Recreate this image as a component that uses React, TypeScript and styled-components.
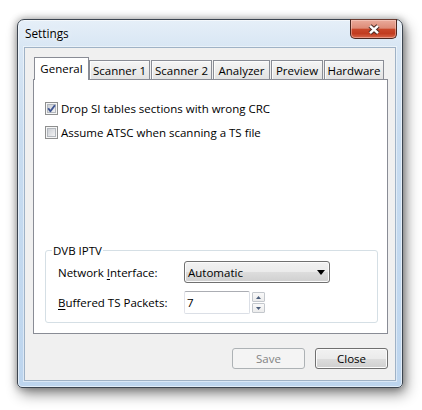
import React, { useId } from "react";
import styled, { createGlobalStyle } from "styled-components";

const Global = createGlobalStyle`
  html, body { margin: 0; padding: 0; background: #ffffff; }
  body {
    width: 422px; height: 410px; overflow: hidden;
    font-family: "Open Sans", "Noto Sans", sans-serif;
    font-size: 11.5px; color: #000;
  }
  * { box-sizing: border-box; }
`;

const Page = styled.div`
  padding: 19px 0 0 17px;
`;

const Window = styled.div`
  width: 386px;
  height: 369px;
  display: flex;
  flex-direction: column;
  padding: 0 6px 6px 6px;
  border: 1px solid #3c4550;
  border-radius: 7px 7px 5px 5px;
  background: linear-gradient(180deg, #e6eff8 0px, #d8e6f4 28px, #c8dcf0 120px, #bdd5ee 100%);
  box-shadow: inset 0 0 0 1px rgba(255, 255, 255, 0.55), 0 0 7px 1px rgba(0, 0, 0, 0.28),
    3px 6px 14px rgba(0, 0, 0, 0.45);
`;

const TitleBar = styled.div`
  height: 27px;
  display: flex;
  align-items: flex-start;
  justify-content: space-between;
`;

const Title = styled.div`
  padding: 6px 0 0 1px;
  line-height: 15px;
  font-size: 11.8px;
  text-shadow: 0 0 6px rgba(255, 255, 255, 0.9);
`;

const CloseBtn = styled.div`
  width: 47px;
  height: 20px;
  margin: -1px -1px 0 0;
  display: flex;
  align-items: center;
  justify-content: center;
  border: 1px solid #4b2720;
  border-top-color: #6a3a30;
  border-radius: 0 0 5px 5px;
  background: linear-gradient(180deg, #eaab9c 0%, #dd8b77 45%, #c8472a 52%, #c13c20 75%, #d8674a 100%);
  box-shadow: inset 0 0 0 1px rgba(255, 220, 210, 0.45);
`;

const Client = styled.div`
  flex: 1;
  display: flex;
  flex-direction: column;
  background: #f0f0f0;
  border: 1px solid #9fb2c6;
  box-shadow: 0 0 0 1px rgba(255, 255, 255, 0.45);
  padding: 9px 7px 11px 8px;
`;

const TabRow = styled.div`
  position: relative;
  z-index: 1;
  height: 22px;
  display: flex;
  align-items: flex-start;
  gap: 1px;
  padding-left: 1px;
`;

const Tab = styled.div<{ $active?: boolean; $w: number }>`
  width: ${(p) => p.$w}px;
  height: ${(p) => (p.$active ? 23 : 19)}px;
  margin-top: ${(p) => (p.$active ? 0 : 3)}px;
  margin-right: ${(p) => (p.$active ? -1 : 0)}px;
  display: flex;
  align-items: center;
  justify-content: center;
  padding-bottom: ${(p) => (p.$active ? 2 : 0)}px;
  border: 1px solid #898c95;
  border-bottom: none;
  background: ${(p) =>
    p.$active ? "#ffffff" : "linear-gradient(180deg, #f5f5f5 0%, #ececec 50%, #e2e2e2 100%)"};
  box-shadow: ${(p) => (p.$active ? "none" : "inset 1px 1px 0 #fbfbfb")};
  white-space: nowrap;
`;

const Panel = styled.div`
  height: 255px;
  display: flex;
  flex-direction: column;
  background: #ffffff;
  border: 1px solid #898c95;
  padding: 21px 9px 10px 11px;
`;

const CheckList = styled.div`
  display: flex;
  flex-direction: column;
  gap: 9px;
`;

const CheckRow = styled.div`
  height: 15px;
  display: flex;
  align-items: center;
  gap: 3px;
  line-height: 15px;
`;

const Group = styled.fieldset`
  margin: auto 0 0 0;
  padding: 3px 9px 8px 12px;
  border: 1px solid #d5dfe5;
  border-radius: 3px;
  min-width: 0;
`;

const Legend = styled.legend`
  margin-left: -6px;
  padding: 0 1px;
  line-height: 15px;
`;

const FormGrid = styled.div`
  display: grid;
  grid-template-columns: 126px 1fr;
  row-gap: 8px;
  align-items: center;
`;

const Label = styled.span`
  line-height: 15px;
`;

const Combo = styled.div`
  width: 146px;
  height: 22px;
  display: flex;
  align-items: center;
  justify-content: space-between;
  padding: 0 4px 0 3px;
  border: 1px solid #707070;
  border-radius: 3px;
  background: linear-gradient(180deg, #f2f2f2 0%, #ebebeb 50%, #dddddd 51%, #cfcfcf 100%);
  box-shadow: inset 0 0 0 1px #fbfbfb;
`;

const SpinBox = styled.div`
  display: flex;
  align-items: center;
  gap: 2px;
`;

const TextBox = styled.div`
  width: 66px;
  height: 23px;
  display: flex;
  align-items: center;
  padding-left: 2px;
  background: #ffffff;
  border: 1px solid #dbdfe6;
  border-top-color: #abadb3;
  border-left-color: #e2e3ea;
  border-radius: 2px;
`;

const SpinCol = styled.div`
  display: flex;
  flex-direction: column;
  gap: 1px;
`;

const SpinBtn = styled.div`
  width: 13px;
  height: 10px;
  display: flex;
  align-items: center;
  justify-content: center;
  border: 1px solid #c3c7cc;
  border-radius: 1px;
  background: linear-gradient(180deg, #f9f9f9 0%, #ececec 100%);
`;

const ButtonRow = styled.div`
  margin-top: 14px;
  display: flex;
  justify-content: flex-end;
  gap: 10px;
`;

const Button = styled.div<{ $disabled?: boolean }>`
  width: 73px;
  height: 21px;
  display: flex;
  align-items: center;
  justify-content: center;
  border-radius: 3px;
  border: 1px solid ${(p) => (p.$disabled ? "#adb2b5" : "#707070")};
  color: ${(p) => (p.$disabled ? "#838383" : "#000")};
  background: ${(p) =>
    p.$disabled
      ? "#f4f4f4"
      : "linear-gradient(180deg, #f2f2f2 0%, #ebebeb 50%, #dddddd 51%, #cfcfcf 100%)"};
  box-shadow: ${(p) => (p.$disabled ? "none" : "inset 0 0 0 1px #fbfbfb")};
`;

const U = styled.span`
  text-decoration: underline;
  text-underline-offset: 2px;
`;

function CheckBox({ checked }: { checked?: boolean }) {
  const id = useId().replace(/:/g, "");
  return (
    <svg width="13" height="13" viewBox="0 0 13 13" style={{ flex: "none" }}>
      <defs>
        <linearGradient id={`g${id}`} x1="0" y1="0" x2="1" y2="1">
          <stop offset="0" stopColor="#c9cdd3" />
          <stop offset="1" stopColor="#f5f5f5" />
        </linearGradient>
      </defs>
      <rect x="0.5" y="0.5" width="12" height="12" fill="#f6f6f6" stroke="#8e8f8f" />
      <rect x="2.5" y="2.5" width="8" height="8" fill={`url(#g${id})`} stroke="#b3b8be" />
      {checked && (
        <path
          d="M3.2 6.3 L5.4 9.2 L9.9 3.2"
          fill="none"
          stroke="#3f5593"
          strokeWidth="1.9"
          strokeLinejoin="round"
        />
      )}
    </svg>
  );
}

function CloseGlyph() {
  return (
    <svg width="14" height="11" viewBox="0 0 14 11">
      <path d="M3 1.8 L11 9.2 M11 1.8 L3 9.2" stroke="#4a2a24" strokeWidth="4.4" />
      <path d="M3 1.8 L11 9.2 M11 1.8 L3 9.2" stroke="#ffffff" strokeWidth="2.5" />
    </svg>
  );
}

const tabs = [
  { label: "General", w: 55, active: true },
  { label: "Scanner 1", w: 61 },
  { label: "Scanner 2", w: 61 },
  { label: "Analyzer", w: 57 },
  { label: "Preview", w: 52 },
  { label: "Hardware", w: 60 },
];

export default function App() {
  return (
    <>
      <Global />
      <Page>
        <Window>
          <TitleBar>
            <Title>Settings</Title>
            <CloseBtn>
              <CloseGlyph />
            </CloseBtn>
          </TitleBar>
          <Client>
            <TabRow>
              {tabs.map((t) => (
                <Tab key={t.label} $w={t.w} $active={t.active}>
                  {t.label}
                </Tab>
              ))}
            </TabRow>
            <Panel>
              <CheckList>
                <CheckRow>
                  <CheckBox checked />
                  <span>Drop SI tables sections with wrong CRC</span>
                </CheckRow>
                <CheckRow>
                  <CheckBox />
                  <span>Assume ATSC when scanning a TS file</span>
                </CheckRow>
              </CheckList>
              <Group>
                <Legend>DVB IPTV</Legend>
                <FormGrid>
                  <Label>
                    Network <U>I</U>nterface:
                  </Label>
                  <Combo>
                    <span>Automatic</span>
                    <svg width="8" height="5" viewBox="0 0 8 5">
                      <path d="M0 0 H8 L4 5 Z" fill="#000" />
                    </svg>
                  </Combo>
                  <Label>
                    <U>B</U>uffered TS Packets:
                  </Label>
                  <SpinBox>
                    <TextBox>7</TextBox>
                    <SpinCol>
                      <SpinBtn>
                        <svg width="5" height="3" viewBox="0 0 5 3">
                          <path d="M0 3 H5 L2.5 0 Z" fill="#4d5f7c" />
                        </svg>
                      </SpinBtn>
                      <SpinBtn>
                        <svg width="5" height="3" viewBox="0 0 5 3">
                          <path d="M0 0 H5 L2.5 3 Z" fill="#4d5f7c" />
                        </svg>
                      </SpinBtn>
                    </SpinCol>
                  </SpinBox>
                </FormGrid>
              </Group>
            </Panel>
            <ButtonRow>
              <Button $disabled>Save</Button>
              <Button>Close</Button>
            </ButtonRow>
          </Client>
        </Window>
      </Page>
    </>
  );
}
